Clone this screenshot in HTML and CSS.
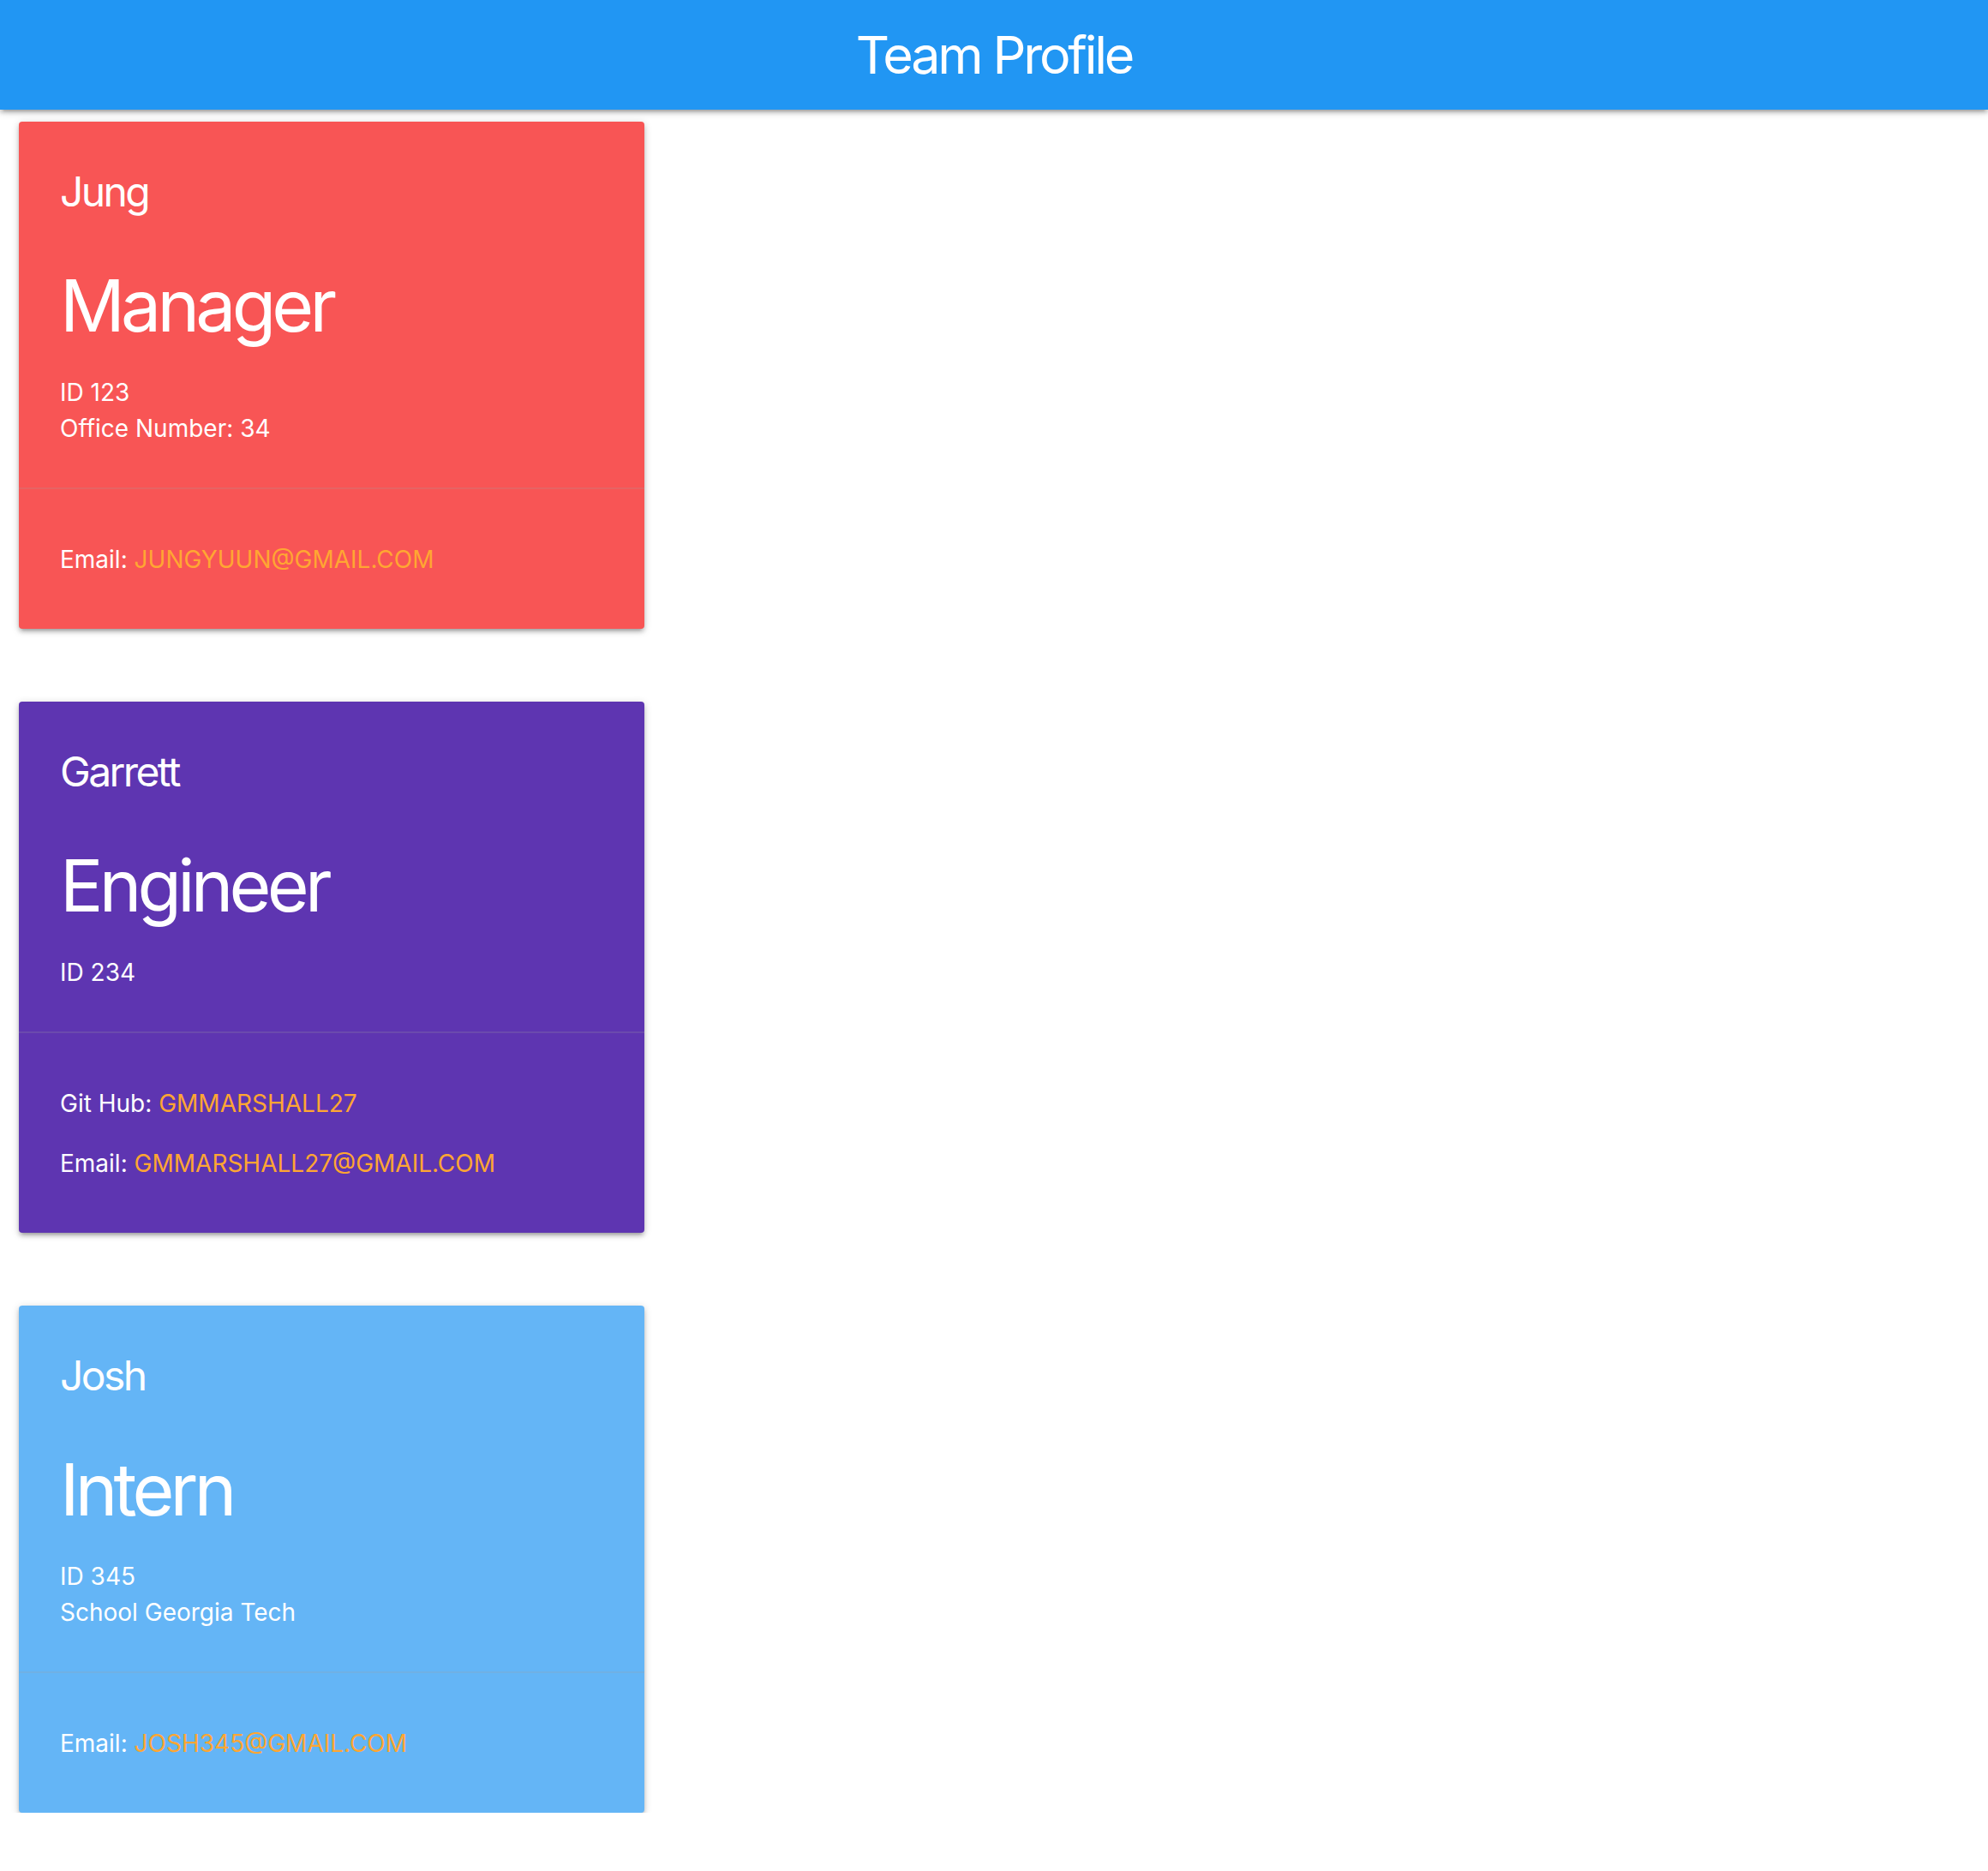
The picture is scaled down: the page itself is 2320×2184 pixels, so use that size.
FILE: index.html
```html
<!DOCTYPE html>
<html lang="en">
<head>
    <meta charset="UTF-8">
    <meta name="viewport" content="width=device-width, initial-scale=1.0">
    <title>Team Profile</title>
    <link rel="stylesheet" href="styles.css">
</head>
<body>
    <header class="nav">
        <div class="brand">Team Profile</div>
    </header>
    <main class="team">
        <div class="card card-manager">
            <div class="card-content">
                <span class="card-title">Jung</span>
                <h3 class="role">Manager</h3>
                <p>ID 123<br>Office Number: 34</p>
            </div>
            <div class="card-action">
                <p>Email: <a href="mailto:jungyuun@gmail.com">jungyuun@gmail.com</a></p>
            </div>
        </div>

        <div class="card card-engineer">
            <div class="card-content">
                <span class="card-title">Garrett</span>
                <h3 class="role">Engineer</h3>
                <p>ID 234</p>
            </div>
            <div class="card-action">
                <p>Git Hub: <a href="#">gmmarshall27</a></p>
                <p>Email: <a href="mailto:gmmarshall27@gmail.com">gmmarshall27@gmail.com</a></p>
            </div>
        </div>

        <div class="card card-intern">
            <div class="card-content">
                <span class="card-title">Josh</span>
                <h3 class="role">Intern</h3>
                <p>ID 345<br>School Georgia Tech</p>
            </div>
            <div class="card-action">
                <p>Email: <a href="mailto:josh345@gmail.com">josh345@gmail.com</a></p>
            </div>
        </div>
    </main>
</body>
</html>
```

FILE: styles.css
```css
* {
    box-sizing: border-box;
    margin: 0;
    padding: 0;
}
body {
    font-family: Inter, 'Noto Sans', sans-serif;
    background-color: #fff;
    color: #fff;
    font-size: 28px;
    line-height: 1.5;
}
.nav {
    background-color: #2196f3;
    height: 128px;
    display: flex;
    justify-content: center;
    align-items: center;
    box-shadow: 0 4px 4px 0 rgba(0, 0, 0, 0.14), 0 6px 2px -4px rgba(0, 0, 0, 0.12), 0 2px 10px 0 rgba(0, 0, 0, 0.2);
    position: relative;
    z-index: 1;
}
.brand {
    font-size: 61px;
    line-height: 128px;
    font-weight: 400;
    letter-spacing: -3.2px;
}
.team {
    padding: 14px 22px 0;
    display: flex;
    flex-direction: column;
    gap: 85px;
}
.card {
    width: 730px;
    border-radius: 4px;
    box-shadow: 0 4px 4px 0 rgba(0, 0, 0, 0.14), 0 6px 2px -4px rgba(0, 0, 0, 0.12), 0 2px 10px 0 rgba(0, 0, 0, 0.2);
}
.card-manager {
    background-color: #f85555;
}
.card-engineer {
    background-color: #5e35b1;
}
.card-intern {
    background-color: #64b5f6;
}
.card-content {
    padding: 48px;
}
.card-title {
    display: block;
    font-size: 48px;
    line-height: 64px;
    font-weight: 400;
    letter-spacing: -2.6px;
    padding-top: 2px;
}
.role {
    font-size: 84px;
    line-height: 96px;
    font-weight: 400;
    letter-spacing: -4.8px;
    margin: 53px 0 32px;
}
.card-action {
    border-top: 2px solid rgba(160, 160, 160, 0.2);
    padding: 33px 48px 32px;
}
.card-action p {
    margin: 28px 0;
}
.card-action a {
    color: #ffa632;
    text-decoration: none;
    text-transform: uppercase;
}
```
